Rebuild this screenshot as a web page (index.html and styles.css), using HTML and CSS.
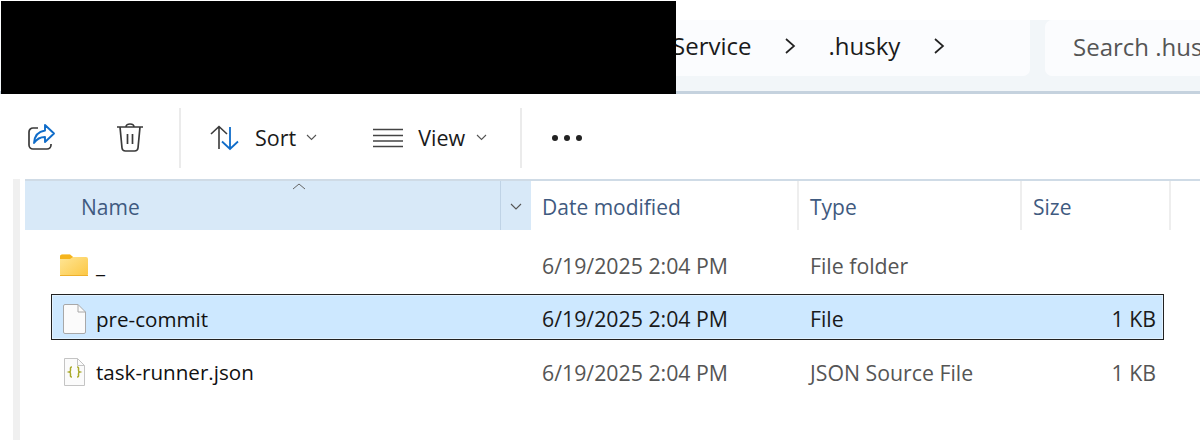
FILE: index.html
```html
<!DOCTYPE html>
<html lang="en">
<head>
<meta charset="utf-8">
<title>.husky</title>
<link rel="stylesheet" href="styles.css">
</head>
<body>
<div class="window">
  <header class="topbar">
    <div class="address">
      <span class="crumb">Service</span>
      <svg class="sep" width="12" height="18" viewBox="0 0 12 18"><path d="M2 2l8 7-8 7" fill="none" stroke="#222" stroke-width="1.7"/></svg>
      <span class="crumb">.husky</span>
      <svg class="sep" width="12" height="18" viewBox="0 0 12 18"><path d="M2 2l8 7-8 7" fill="none" stroke="#222" stroke-width="1.7"/></svg>
    </div>
    <div class="search">Search .husky</div>
    <div class="redaction"></div>
  </header>
  <div class="toolbar">
    <button class="tool share" aria-label="Share">
      <svg width="32" height="30" viewBox="0 0 32 30"><path d="M12 5H7a4 4 0 0 0-4 4v13a4 4 0 0 0 4 4h14a4 4 0 0 0 4-4v-1" fill="none" stroke="#3a3a3a" stroke-width="1.7"/><path d="M19 2l9 8.500-9 8.500v-5c-5 0-8 1.500-11 6 .5-7 4-11.500 11-12.500z" fill="#fff" stroke="#0f6cc9" stroke-width="1.9" stroke-linejoin="round"/></svg>
    </button>
    <button class="tool trash" aria-label="Delete">
      <svg width="30" height="32" viewBox="0 0 30 32"><path d="M2 5h26M11 5c0-4 8-4 8 0M5 5l2 21a3.500 3.500 0 0 0 3.500 3h9a3.500 3.500 0 0 0 3.500-3l2-21M12.500 12v10M17.500 12v10" fill="none" stroke="#3a3a3a" stroke-width="1.700"/></svg>
    </button>
    <span class="divider"></span>
    <button class="tool labeled sort">
      <svg width="32" height="26" viewBox="0 0 32 26"><path d="M10 24V2M2 9l8-7.500L18 9" fill="none" stroke="#3a3a3a" stroke-width="1.600"/><path d="M21 2v22M13 16.500l8 7.500 8-7.500" fill="none" stroke="#0f6cc9" stroke-width="1.800"/></svg>
      <span>Sort</span>
      <svg class="chev" width="11" height="7" viewBox="0 0 11 7"><path d="M1 1l4.500 4.500L10 1" fill="none" stroke="#555" stroke-width="1.100"/></svg>
    </button>
    <button class="tool labeled view">
      <svg width="30" height="20" viewBox="0 0 30 20"><path d="M0 1.500h30M0 7.500h30M0 13h30M0 18.500h30" fill="none" stroke="#444" stroke-width="1.500"/></svg>
      <span>View</span>
      <svg class="chev" width="11" height="7" viewBox="0 0 11 7"><path d="M1 1l4.500 4.500L10 1" fill="none" stroke="#555" stroke-width="1.100"/></svg>
    </button>
    <span class="divider second"></span>
    <button class="tool more" aria-label="More"><i></i><i></i><i></i></button>
  </div>
  <main class="content">
    <div class="rail"></div>
    <div class="list">
      <div class="head">
        <div class="col name active">
          <svg class="caret" width="14" height="7" viewBox="0 0 14 7"><path d="M1 6l6-5 6 5" fill="none" stroke="#666" stroke-width="1"/></svg>
          <span>Name</span>
        </div>
        <div class="col drop active"><svg width="12" height="7" viewBox="0 0 12 7"><path d="M1 1l5 5 5-5" fill="none" stroke="#555" stroke-width="1.100"/></svg></div>
        <div class="col date">Date modified</div>
        <div class="col type">Type</div>
        <div class="col size">Size</div>
      </div>
      <div class="row">
        <div class="cell name">
          <svg class="ico folder" width="28" height="22" viewBox="0 0 28 22"><defs><linearGradient id="fold" x1="0" y1="0" x2="1" y2="1"><stop offset="0" stop-color="#ffe79a"/><stop offset="1" stop-color="#fcc743"/></linearGradient></defs><path d="M0 2.500A2 2 0 0 1 2 .5h8l3 2.500h13a2 2 0 0 1 2 2V20a2 2 0 0 1-2 2H2a2 2 0 0 1-2-2z" fill="url(#fold)"/><path d="M0 2.500A2 2 0 0 1 2 .5h8l3 2.500-3 2H0z" fill="#f5b41c"/><path d="M0 21.500h28" stroke="#eeb02c"/></svg>
          <span>_</span>
        </div>
        <div class="cell date">6/19/2025 2:04 PM</div>
        <div class="cell type">File folder</div>
        <div class="cell size"></div>
      </div>
      <div class="row selected">
        <div class="cell name">
          <svg class="ico file" width="23" height="30" viewBox="0 0 23 30"><path d="M.5 2A1.500 1.500 0 0 1 2 .5h13l7.500 7.500v20a1.500 1.500 0 0 1-1.500 1.500H2A1.500 1.500 0 0 1 .5 28z" fill="#fbfbfb" stroke="#a8a8a8"/><path d="M15 .5V8h7.500" fill="none" stroke="#a8a8a8"/></svg>
          <span>pre-commit</span>
        </div>
        <div class="cell date">6/19/2025 2:04 PM</div>
        <div class="cell type">File</div>
        <div class="cell size">1 KB</div>
      </div>
      <div class="row last">
        <div class="cell name">
          <svg class="ico file" width="23" height="28" viewBox="0 0 23 28"><path d="M1.500.5h13l7 7v20h-20z" fill="#fbfbfb" stroke="#c4c4c4"/><path d="M14.500.5v7h7" fill="none" stroke="#c4c4c4"/><path d="M9 9c-2 0-1.500 1-1.500 3s0 1.500-1.500 2c1.500.5 1.500 0 1.500 2s-.5 3 1.500 3M14 9c2 0 1.500 1 1.500 3s0 1.500 1.500 2c-1.500.5-1.500 0-1.500 2s.5 3-1.500 3" fill="none" stroke="#a9a92a" stroke-width="1.500"/></svg>
          <span>task-runner.json</span>
        </div>
        <div class="cell date">6/19/2025 2:04 PM</div>
        <div class="cell type">JSON Source File</div>
        <div class="cell size">1 KB</div>
      </div>
    </div>
  </main>
</div>
</body>
</html>
```
FILE: styles.css
```css
* { box-sizing: border-box; }
html, body { margin: 0; height: 100%; background: #fff; overflow: hidden; }
body { font-family: "Open Sans", "Noto Sans", sans-serif; font-size: 20px; color: #1a1a1a; }
.window { width: 1200px; height: 440px; display: flex; flex-direction: column; }

.topbar { position: relative; height: 94px; padding: 20px 0 0 0; display: flex; gap: 15px;
  background: linear-gradient(#fff 0 20px, #f2f6f9 20px); border-bottom: 3px solid #c5d2de; flex: none; }
.address { width: 1030px; height: 56px; background: #fbfcfe; border-radius: 0 0 7px 7px;
  display: flex; align-items: center; padding-left: 672px; padding-bottom: 4px; font-size: 24px; }
.crumb { line-height: 1; }
.sep { margin: 0 32px 0 33px; }
.search { flex: 1; height: 56px; background: #fbfcfe; border-radius: 7px 0 0 7px; color: #555;
  display: flex; align-items: center; padding-left: 28px; padding-bottom: 4px; font-size: 24px; white-space: nowrap; overflow: hidden; }
.redaction { position: absolute; left: 1px; top: 1px; width: 675px; height: 93px; background: #000; }

.toolbar { height: 85px; padding-top: 2px; display: flex; align-items: center; flex: none; background: #fff; }
.tool { border: 0; background: none; padding: 0; font: inherit; color: #1a1a1a; display: flex; align-items: center; }
.share { margin-left: 26px; width: 32px; }
.trash { margin-left: 57px; width: 30px; }
.divider { width: 2px; height: 60px; background: #ebebeb; margin-left: 34px; }
.divider.second { margin-left: 33px; }
.labeled { font-size: 21.500px; }
.sort { margin-left: 28px; gap: 14px; }
.sort .chev { margin-left: -4px; }
.view { margin-left: 56px; gap: 15px; }
.view .chev { margin-left: -4px; }
.more { margin-left: 30px; gap: 6px; }
.more i { width: 6px; height: 6px; border-radius: 50%; background: #222; display: block; }

.content { flex: 1; display: flex; min-height: 0; }
.rail { width: 22px; flex: none; background: linear-gradient(90deg, #fff 13px, #f0f0f0 13px, #f0f0f0 20px, #fff 20px); }
.list { flex: 1; display: flex; flex-direction: column; }

.head { height: 51px; margin-left: 3px; display: flex; border-top: 2px solid #cfdbe6; color: #3f5a80; font-size: 21px; }
.col { display: flex; align-items: center; padding-top: 2px; border-right: 2px solid #eeeeee; position: relative; }
.col.name { width: 476px; padding-left: 56px; }
.col.drop { width: 30px; justify-content: center; border-right: 0; }
.col.active { background: #d8e9f8; }
.col.name.active { border-right: 1px solid #bfd3e6; }
.caret { position: absolute; left: 267px; top: 2px; }
.col.date { width: 268px; padding-left: 11px; }
.col.type { width: 223px; padding-left: 11px; }
.col.size { width: 149px; padding-left: 11px; }

.row { height: 46px; margin: 0 0 0 29px; width: 1113px; display: flex; align-items: center; font-size: 21.300px; color: #555; }
.row:nth-child(2) { margin-top: 12px; }
.row.selected { margin-top: 6px; margin-bottom: 8px; padding-top: 3px; background: #cde8ff; box-shadow: inset 0 0 0 1px #222, inset 0 0 0 2px #e2f2ff; color: #1a1a1a; }
.row.last { padding-top: 2px; }
.cell { display: flex; align-items: center; }
.cell.name { width: 491px; padding-left: 11px; color: #111; font-size: 20.600px; gap: 9px; }
.cell.name .ico { flex: none; }
.ico.folder { margin-left: -2px; margin-right: -1px; }
.ico.file { margin-left: 1px; margin-right: 1px; }
.cell.date { width: 268px; }
.cell.type { width: 223px; }
.cell.size { flex: 1; justify-content: flex-end; padding-right: 8px; }
```
